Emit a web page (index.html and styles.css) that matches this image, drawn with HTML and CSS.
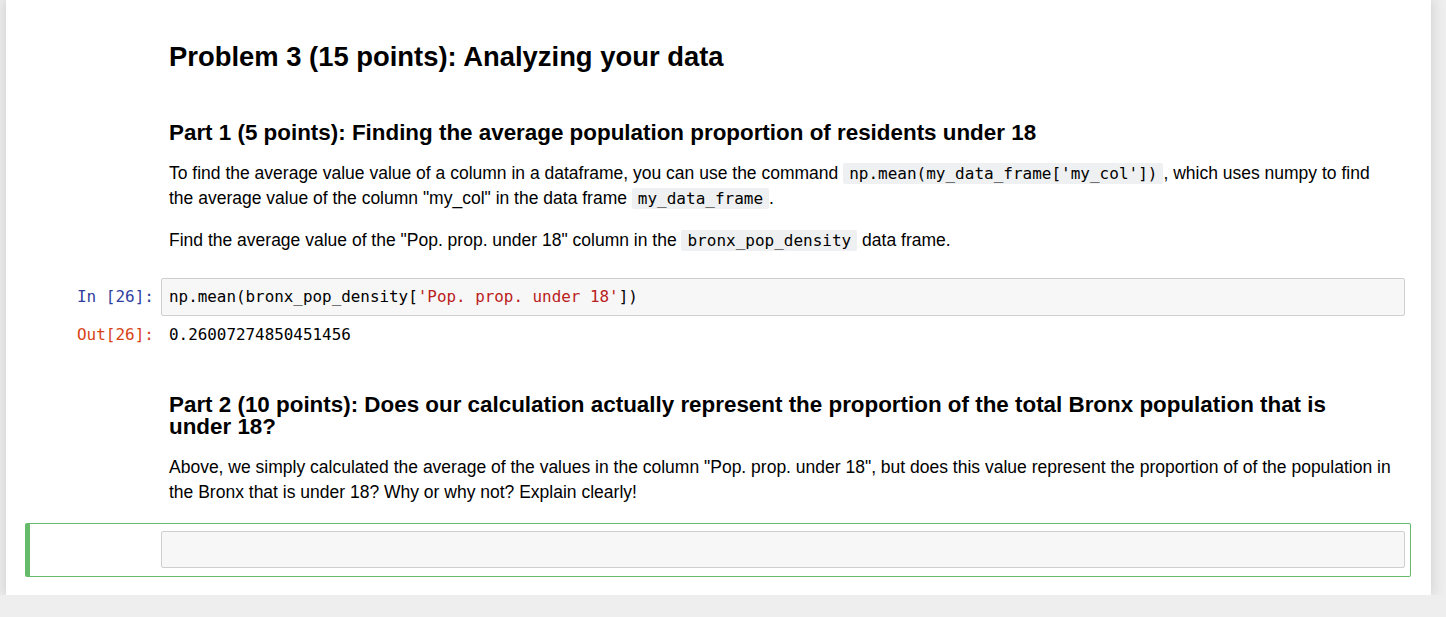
FILE: index.html
```html
<!DOCTYPE html>
<html>
<head>
<meta charset="utf-8">
<link rel="stylesheet" href="styles.css">
</head>
<body>
<div class="notebook">
  <div class="cell">
    <div class="prompt"></div>
    <div class="md">
      <h1 class="h1">Problem 3 (15 points): Analyzing your data</h1>
      <h3 class="h3 first">Part 1 (5 points): Finding the average population proportion of residents under 18</h3>
      <p class="p">To find the average value value of a column in a dataframe, you can use the command <code class="ic">np.mean(my_data_frame['my_col'])</code>, which uses numpy to find the average value of the column "my_col" in the data frame <code class="ic">my_data_frame</code>.</p>
      <p class="p">Find the average value of the "Pop. prop. under 18" column in the <code class="ic">bronx_pop_density</code> data frame.</p>
    </div>
  </div>
  <div class="cell codecell">
    <div class="row">
      <div class="prompt in">In&nbsp;[26]:</div>
      <div class="input"><span class="src">np.mean(bronx_pop_density[<span class="str">'Pop. prop. under 18'</span>])</span></div>
    </div>
    <div class="row outrow">
      <div class="prompt out">Out[26]:</div>
      <div class="output">0.26007274850451456</div>
    </div>
  </div>
  <div class="cell">
    <div class="prompt"></div>
    <div class="md">
      <h3 class="h3 second">Part 2 (10 points): Does our calculation actually represent the proportion of the total Bronx population that is under 18?</h3>
      <p class="p">Above, we simply calculated the average of the values in the column "Pop. prop. under 18", but does this value represent the proportion of of the population in the Bronx that is under 18? Why or why not? Explain clearly!</p>
    </div>
  </div>
  <div class="cell selected">
    <div class="prompt"></div>
    <div class="input empty"></div>
  </div>
</div>
</body>
</html>
```

FILE: styles.css
```css
html, body {
  margin: 0;
  padding: 0;
  background: #eeeeee;
}
body {
  font-family: "Liberation Sans", Arial, sans-serif;
  color: #000;
}
.notebook {
  margin-left: 6px;
  width: 1425px;
  box-sizing: border-box;
  background: #fff;
  padding: 0 20px 18px 19px;
  box-shadow: 0 0 12px 1px rgba(87, 87, 87, 0.2);
}
.cell {
  display: flex;
  border: 1px solid transparent;
  padding: 0 5px;
}
.codecell {
  flex-direction: column;
}
.row {
  display: flex;
}
.prompt {
  flex: 0 0 130px;
  box-sizing: border-box;
  padding-right: 7px;
  text-align: right;
  font-family: "DejaVu Sans Mono", "Liberation Mono", monospace;
  font-size: 16px;
  line-height: 20px;
}
.md {
  flex: 1;
  padding: 0 8px;
}
.h1 {
  margin: 0;
  padding-top: 38px;
  font-size: 27.4px;
  line-height: 36px;
  font-weight: bold;
}
.h3 {
  margin: 0;
  font-size: 22.4px;
  line-height: 22px;
  font-weight: bold;
}
.h3.first {
  margin-top: 47px;
}
.h3.second {
  margin-top: 47px;
  max-width: 1200px;
}
.p {
  margin: 17px 0 0 0;
  font-size: 17.5px;
  line-height: 25px;
}
.ic {
  font-family: "DejaVu Sans Mono", "Liberation Mono", monospace;
  font-size: 16px;
  background: #eff0f1;
  padding: 1px 6px;
  border-radius: 2px;
}
.codecell {
  margin-top: 23px;
}
.prompt.in {
  color: #303f9f;
  padding-top: 9px;
}
.prompt.out {
  color: #d84315;
}
.input {
  flex: 1;
  background: #f7f7f7;
  border: 1px solid #cfcfcf;
  border-radius: 2px;
  padding: 8px 7px;
  font-family: "DejaVu Sans Mono", "Liberation Mono", monospace;
  font-size: 15.9px;
  line-height: 20px;
  min-height: 20px;
}
.str {
  color: #ba2121;
}
.outrow {
  margin-top: 9px;
}
.output {
  flex: 1;
  padding-left: 8px;
  font-family: "DejaVu Sans Mono", "Liberation Mono", monospace;
  font-size: 15.9px;
  line-height: 20px;
}
.selected {
  margin-top: 17px;
  border: 1px solid #66bb6a;
  border-left: 5px solid #66bb6a;
  border-radius: 2px;
  padding: 7px 5px 8px 1px;
}
.input.empty {
  padding: 0;
  height: 35px;
  min-height: 0;
}
```
